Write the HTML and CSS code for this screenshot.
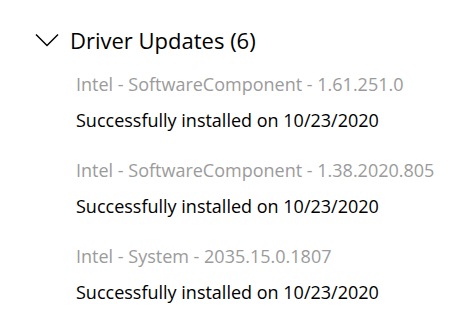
FILE: index.html
```html
<!DOCTYPE html>
<html lang="en">
<head>
    <meta charset="UTF-8">
    <meta name="viewport" content="width=device-width, initial-scale=1.0">
    <title>Driver Updates</title>
    <link rel="stylesheet" href="styles.css">
</head>
<body>
    <section class="group">
        <div class="group-header">
            <svg class="chevron" width="24" height="14" viewBox="0 0 24 14">
                <path d="M1 1.5 L12 12.5 L23 1.5" fill="none" stroke="#000" stroke-width="1.5"/>
            </svg>
            <h2 class="group-title">Driver Updates (6)</h2>
        </div>
        <ul class="update-list">
            <li class="update">
                <div class="update-name">Intel - SoftwareComponent - 1.61.251.0</div>
                <div class="update-status">Successfully installed on 10/23/2020</div>
            </li>
            <li class="update">
                <div class="update-name">Intel - SoftwareComponent - 1.38.2020.805</div>
                <div class="update-status">Successfully installed on 10/23/2020</div>
            </li>
            <li class="update">
                <div class="update-name">Intel - System - 2035.15.0.1807</div>
                <div class="update-status">Successfully installed on 10/23/2020</div>
            </li>
        </ul>
    </section>
</body>
</html>
```

FILE: styles.css
```css
body {
    font-family: 'Open Sans', 'Noto Sans', sans-serif;
    margin: 0;
    padding: 0;
    color: #000;
    background-color: #fff;
}

.group {
    padding: 24px 0 0 35px;
}

.group-header {
    display: flex;
    align-items: center;
    gap: 11px;
}

.chevron {
    display: block;
}

.group-title {
    margin: 0;
    font-size: 22px;
    font-weight: normal;
    line-height: 32px;
}

.update-list {
    list-style: none;
    margin: 0;
    padding: 0 0 0 41px;
}

.update {
    display: flex;
    flex-direction: column;
    gap: 12px;
    margin-top: 16px;
}

.update + .update {
    margin-top: 26px;
}

.update-name {
    color: #9b9b9b;
    font-size: 18px;
    line-height: 24px;
}

.update-status {
    font-size: 18px;
    line-height: 24px;
}
```
